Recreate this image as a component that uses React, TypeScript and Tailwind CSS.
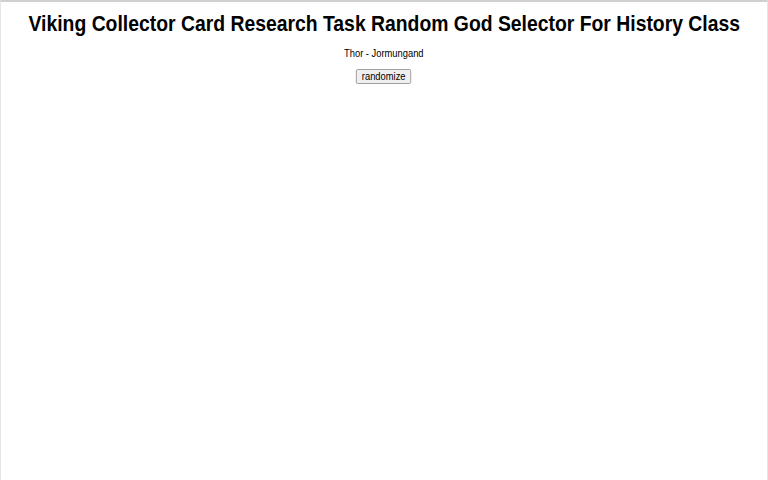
import React, { useState } from "react";

const gods = [
  "Thor - Jormungand",
  "Odin - Sleipnir",
  "Loki - Fenrir",
  "Freyja - Brisingamen",
  "Tyr - Fenrir",
  "Heimdall - Gjallarhorn",
];

export default function App() {
  const [pick, setPick] = useState(0);

  const randomize = () => {
    setPick(Math.floor(Math.random() * gods.length));
  };

  return (
    <div className="min-h-[480px] bg-white border-t-2 border-x border-t-[#d0d0d0] border-x-[#e6e6e6] text-black font-['Liberation_Sans',Arial,sans-serif] text-center">
      <h1 className="flex justify-center pt-[9px] text-[22px] leading-[26px] font-bold whitespace-nowrap">
        <span className="shrink-0 scale-x-[0.88]">
          Viking Collector Card Research Task Random God Selector For History Class
        </span>
      </h1>
      <p className="flex justify-center mt-[10px] text-[11px] leading-[13px]">
        <span className="scale-x-[0.85]">{gods[pick]}</span>
      </p>
      <div className="flex justify-center mt-[9px]">
        <button
          onClick={randomize}
          className="scale-x-[0.85] h-[15px] px-[6px] text-[11px] leading-[13px] bg-[#efefef] border border-[#999999] rounded-[2px]"
        >
          randomize
        </button>
      </div>
    </div>
  );
}
